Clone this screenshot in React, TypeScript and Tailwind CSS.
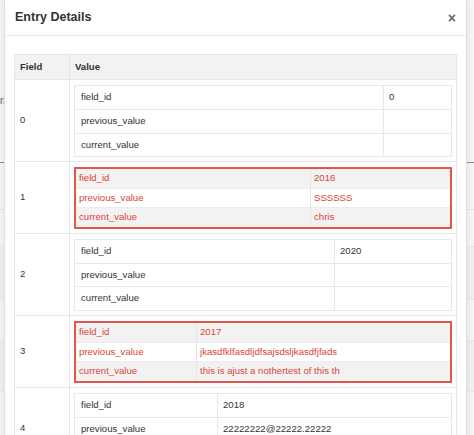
import React from "react";

type Entry = {
  id: number;
  split: number;
  changed?: boolean;
  fieldId: string;
  prev: string;
  curr: string;
};

const entries: Entry[] = [
  { id: 0, split: 310, fieldId: "0", prev: "", curr: "" },
  { id: 1, split: 237, changed: true, fieldId: "2016", prev: "SSSSSS", curr: "chris" },
  { id: 2, split: 261, fieldId: "2020", prev: "", curr: "" },
  {
    id: 3,
    split: 123,
    changed: true,
    fieldId: "2017",
    prev: "jkasdfklfasdljdfsajsdsljkasdfjfads",
    curr: "this is ajust a nothertest of this th",
  },
  { id: 4, split: 144, fieldId: "2018", prev: "22222222@22222.22222", curr: "" },
];

function InnerTable({ entry }: { entry: Entry }) {
  const rows: [string, string][] = [
    ["field_id", entry.fieldId],
    ["previous_value", entry.prev],
    ["current_value", entry.curr],
  ];

  if (entry.changed) {
    return (
      <div className="border-2 border-[#e2564c] text-[#dc4339]">
        {rows.map(([k, v], i) => (
          <div
            key={k}
            className={`flex h-[19.3px] items-center ${i % 2 === 0 ? "bg-[#f2f2f2]" : "bg-white"} ${i > 0 ? "border-t border-[#ececec]" : ""}`}
          >
            <div
              className="flex h-full shrink-0 items-center border-r border-[#e6e6e6] pl-[3px]"
              style={{ width: entry.split - 2 }}
            >
              {k}
            </div>
            <div className="pl-[3px]">{v}</div>
          </div>
        ))}
      </div>
    );
  }

  return (
    <div className="border border-[#e8e8e8]">
      {rows.map(([k, v], i) => (
        <div
          key={k}
          className={`flex h-[23.3px] items-center ${i > 0 ? "border-t border-[#e8e8e8]" : ""}`}
        >
          <div
            className="flex h-full shrink-0 items-center border-r border-[#e8e8e8] pl-[6px]"
            style={{ width: entry.split - 1 }}
          >
            {k}
          </div>
          <div className="pl-[5px]">{v}</div>
        </div>
      ))}
    </div>
  );
}

export default function App() {
  return (
    <div
      className="relative h-[435px] w-[474px] overflow-hidden bg-[#f4f4f4] text-[#333]"
      style={{ fontFamily: '"Liberation Sans", Arial, sans-serif' }}
    >
      {/* page behind the dialog */}
      <div className="flex flex-col pt-[94px]">
        <div className="h-[14px] text-[10px] leading-[14px] text-[#666]">ri</div>
        <div className="mt-[54px] h-px bg-[#8a8a8a]" />
        <div className="mt-[46px] h-px bg-[#e2e2e2]" />
        <div className="mt-[36px] h-[54px] border-y border-[#e6e6e6] bg-[#efefef]" />
        <div className="mt-[40px] h-[52px] border-y border-[#e6e6e6] bg-[#efefef]" />
      </div>

      {/* dialog */}
      <div className="absolute left-[4px] top-0 h-[440px] w-[463px] border-x border-[#dedede] bg-white shadow-[0_0_6px_rgba(0,0,0,0.08)]">
        <div className="flex h-[36px] items-center justify-between border-b border-[#e9e9e9] pl-[10px] pr-[10px]">
          <span className="text-[12.5px] font-semibold text-[#333]">Entry Details</span>
          <span className="text-[14px] font-bold leading-none text-[#666]">×</span>
        </div>

        <div className="px-[9px] pt-[18px] text-[9.6px]">
          <div className="border border-[#e6e6e6]">
            <div className="flex h-[24px] items-center bg-[#f2f2f2] font-bold">
              <div className="flex h-full w-[55px] shrink-0 items-center border-r border-[#e3e3e3] pl-[5px]">
                Field
              </div>
              <div className="pl-[5px]">Value</div>
            </div>

            {entries.map((e) => (
              <div key={e.id} className="flex border-t border-[#e6e6e6]">
                <div className="flex w-[55px] shrink-0 items-center border-r border-[#e6e6e6] pl-[5px]">
                  {e.id}
                </div>
                <div className="flex-1 px-[4px] pb-[4px] pt-[5px]">
                  <InnerTable entry={e} />
                </div>
              </div>
            ))}
          </div>
        </div>
      </div>
    </div>
  );
}
